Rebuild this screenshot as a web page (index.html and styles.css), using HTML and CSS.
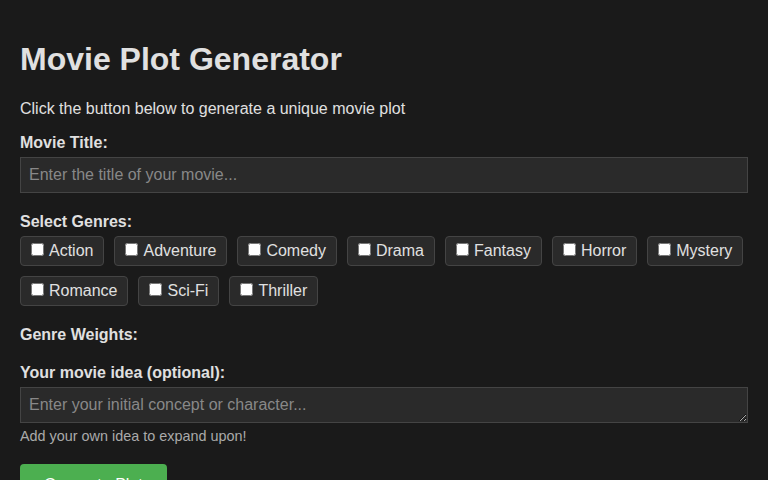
FILE: index.html
```html
<!DOCTYPE html>
<html>
  <head>
    <title>Movie Plot Generator</title>
    <link rel="stylesheet" href="styles.css">
  </head>
  <body>
    <div class="container">
      <h1>Movie Plot Generator</h1>
      <p>Click the button below to generate a unique movie plot</p>

      <div class="form-group">
        <label for="title">Movie Title:</label>
        <input type="text" id="title" placeholder="Enter the title of your movie...">
      </div>

      <div class="form-group">
        <label>Select Genres:</label>
        <div class="genres">
          <label class="genre"><input type="checkbox" value="action">Action</label>
          <label class="genre"><input type="checkbox" value="adventure">Adventure</label>
          <label class="genre"><input type="checkbox" value="comedy">Comedy</label>
          <label class="genre"><input type="checkbox" value="drama">Drama</label>
          <label class="genre"><input type="checkbox" value="fantasy">Fantasy</label>
          <label class="genre"><input type="checkbox" value="horror">Horror</label>
          <label class="genre"><input type="checkbox" value="mystery">Mystery</label>
          <label class="genre"><input type="checkbox" value="romance">Romance</label>
          <label class="genre"><input type="checkbox" value="scifi">Sci-Fi</label>
          <label class="genre"><input type="checkbox" value="thriller">Thriller</label>
        </div>
      </div>

      <div class="form-group weights">
        <label>Genre Weights:</label>
        <div id="weights"></div>
      </div>

      <div class="form-group">
        <label for="idea">Your movie idea (optional):</label>
        <textarea id="idea" rows="1" placeholder="Enter your initial concept or character..."></textarea>
        <div class="hint">Add your own idea to expand upon!</div>
      </div>

      <button id="generate">Generate Plot</button>
    </div>
  </body>
</html>
```

FILE: styles.css
```css
body {
    margin: 0;
    padding: 20px;
    background: #1a1a1a;
    color: #e0e0e0;
    font-family: "Liberation Sans", Arial, sans-serif;
}

h1 {
    font-size: 32px;
    margin: 0.67em 0;
}

p {
    margin: 16px 0;
}

.form-group {
    margin-bottom: 20px;
}

.form-group > label {
    display: block;
    font-weight: bold;
    margin-bottom: 5px;
}

.weights > label {
    margin-bottom: 0;
}

input[type="text"],
textarea {
    display: block;
    width: 100%;
    box-sizing: border-box;
    padding: 8px;
    background: #2a2a2a;
    color: #e0e0e0;
    border: 1px solid #444;
    font-family: inherit;
    font-size: 16px;
    line-height: normal;
    margin: 0;
}

input::placeholder,
textarea::placeholder {
    color: #888;
}

textarea {
    resize: vertical;
    height: 36px;
    overflow: hidden;
}

.genres {
    display: flex;
    flex-wrap: wrap;
    gap: 10px;
}

.genre {
    display: flex;
    align-items: center;
    padding: 5px 10px;
    background: #2a2a2a;
    border: 1px solid #444;
    border-radius: 4px;
}

.genre input {
    margin: 0 5px 3px 0;
    width: 13px;
    height: 13px;
}

.hint {
    margin-top: 5px;
    font-size: 0.9em;
    color: #aaa;
}

#generate {
    background: #4caf50;
    color: #fff;
    border: none;
    border-radius: 4px;
    padding: 12px 24px;
    font-family: inherit;
    font-size: 16px;
    cursor: pointer;
}
```
